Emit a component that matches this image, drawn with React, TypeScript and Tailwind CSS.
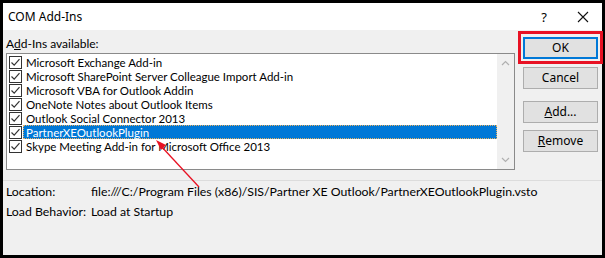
import React from 'react'

const FONT = { fontFamily: '"Noto Sans", "Open Sans", sans-serif' }
const LIST_FONT = { fontFamily: 'Lato, "Noto Sans", sans-serif' }

const addins = [
  'Microsoft Exchange Add-in',
  'Microsoft SharePoint Server Colleague Import Add-in',
  'Microsoft VBA for Outlook Addin',
  'OneNote Notes about Outlook Items',
  'Outlook Social Connector 2013',
  'PartnerXEOutlookPlugin',
  'Skype Meeting Add-in for Microsoft Office 2013',
]
const SELECTED = 5

function Check() {
  return (
    <span className="flex h-[13px] w-[13px] shrink-0 items-center justify-center border border-[#333] bg-white">
      <svg width="11" height="11" viewBox="0 0 11 11">
        <path d="M1.5 5.5 L4.2 8.2 L9.5 2.2" fill="none" stroke="#333" strokeWidth="1.2" />
      </svg>
    </span>
  )
}

function Button({ children, primary }: { children: React.ReactNode; primary?: boolean }) {
  return (
    <div
      className={
        'flex h-[22px] w-[75px] items-center justify-center bg-[#e1e1e1] text-[12px] text-black ' +
        (primary ? 'border-2 border-[#0078d7]' : 'border border-[#adadad]')
      }
    >
      {children}
    </div>
  )
}

export default function App() {
  return (
    <div className="relative h-[258px] w-[605px] overflow-hidden bg-black p-[3px]" style={FONT}>
      <div className="flex h-full flex-col bg-[#f0f0f0] text-[12px] leading-[14px] text-black">
        {/* title bar */}
        <div className="flex h-[27px] shrink-0 items-center bg-white pl-[5px]">
          <span className="flex-1">COM Add-Ins</span>
          <span className="mr-[30px] text-[13px]">?</span>
          <svg width="12" height="12" viewBox="0 0 12 12" className="mr-[13px]">
            <path d="M1 1 L11 11 M11 1 L1 11" stroke="#111" strokeWidth="1.1" />
          </svg>
        </div>

        <div className="flex pl-[3px] pr-[4px]">
          <div className="flex w-[510px] flex-col" style={LIST_FONT}>
            <div className="mt-[7px] h-[14px] text-[12px]">
              A<span className="underline">d</span>d-Ins available:
            </div>
            <div className="mt-[2px] flex h-[117px] border border-[#8a8a8a] bg-white text-[11.5px] leading-[13px]">
              <div className="flex flex-1 flex-col pt-[1px]">
                {addins.map((name, i) => (
                  <div key={name} className="flex h-[14px] items-center pl-[2px]">
                    <Check />
                    {i === SELECTED ? (
                      <span className="ml-[1px] flex h-[14px] flex-1 items-center border border-dotted border-[#e8b060] bg-[#0078d7] pl-[2px] text-white">
                        {name}
                      </span>
                    ) : (
                      <span className="ml-[4px]">{name}</span>
                    )}
                  </div>
                ))}
              </div>
              <div className="flex w-[17px] flex-col items-center justify-between bg-[#f0f0f0] py-[6px]">
                <svg width="9" height="6" viewBox="0 0 9 6">
                  <path d="M1 5 L4.5 1.5 L8 5" fill="none" stroke="#b0b0b0" strokeWidth="1.2" />
                </svg>
                <svg width="9" height="6" viewBox="0 0 9 6">
                  <path d="M1 1 L4.5 4.5 L8 1" fill="none" stroke="#b0b0b0" strokeWidth="1.2" />
                </svg>
              </div>
            </div>
          </div>

          <div className="ml-[8px] flex w-[75px] flex-col">
            <div className="-mx-[5px] mt-[1px] border-[3px] border-[#e81123] px-[2px] pb-[2px] pt-[3px]">
              <Button primary>OK</Button>
            </div>
            <div className="mt-[3px]">
              <Button>Cancel</Button>
            </div>
            <div className="mt-[12px]">
              <Button>
                <span className="underline">A</span>dd...
              </Button>
            </div>
            <div className="mt-[7px]">
              <Button>
                <span className="underline">R</span>emove
              </Button>
            </div>
          </div>
        </div>

        <div className="mt-[10px] h-[2px] border-t border-[#dcdcdc] border-b-white" />

        <div className="flex flex-col text-[12.3px]" style={LIST_FONT}>
          <div className="mt-[3px] flex h-[14px] items-center pl-[3px]">
            <span className="w-[85px]">Location:</span>
            <span>file:///C:/Program Files (x86)/SIS/Partner XE Outlook/PartnerXEOutlookPlugin.vsto</span>
          </div>
          <div className="mt-[6px] flex h-[14px] items-center pl-[3px]">
            <span className="w-[85px]">Load Behavior:</span>
            <span>Load at Startup</span>
          </div>
        </div>
      </div>

      <svg className="pointer-events-none absolute left-0 top-0" width="605" height="258">
        <line x1="199" y1="187" x2="160" y2="145" stroke="#e81123" strokeWidth="1.3" />
        <path d="M156 140 L166 145 L161 150 Z" fill="#e81123" />
      </svg>
    </div>
  )
}
